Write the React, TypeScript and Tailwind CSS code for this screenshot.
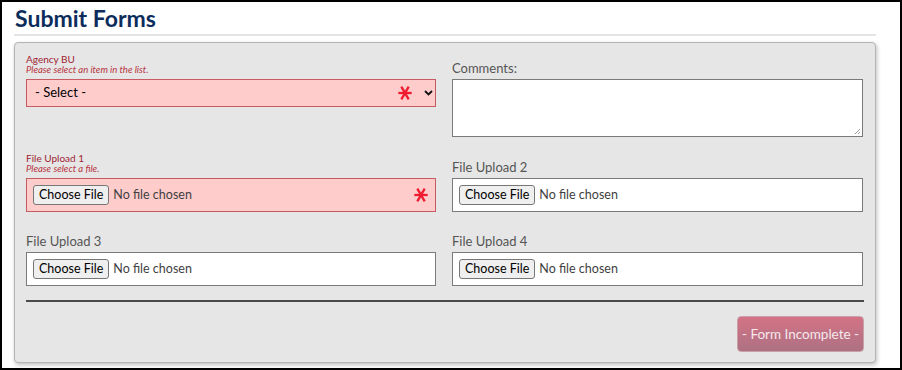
import React from "react";

function Asterisk() {
  return (
    <svg width="14" height="14" viewBox="0 0 14 14" className="shrink-0">
      <g stroke="#ee1c2e" strokeWidth="2.3" strokeLinecap="butt">
        <line x1="0.3" y1="7" x2="13.7" y2="7" />
        <line x1="3.3" y1="0.6" x2="10.7" y2="13.4" />
        <line x1="10.7" y1="0.6" x2="3.3" y2="13.4" />
      </g>
    </svg>
  );
}

function FileBox({ invalid }: { invalid?: boolean }) {
  return (
    <div
      className={
        "h-[34px] flex items-center px-[6px] border " +
        (invalid ? "bg-[#ffcccc] border-[#c85a62]" : "bg-white border-[#7a7a7a]")
      }
    >
      <span className="h-[20px] flex items-center px-[5px] bg-[#efefef] border border-[#767676] rounded-[3px] text-[12.5px] text-black">
        Choose File
      </span>
      <span className="ml-[4px] text-[12.5px] text-[#3f3f3f]">No file chosen</span>
      {invalid && (
        <span className="ml-auto mr-[1px]">
          <Asterisk />
        </span>
      )}
    </div>
  );
}

function RedLabel({ title, hint }: { title: string; hint: string }) {
  return (
    <div className="h-[24px] flex flex-col justify-end pb-[4px]">
      <div className="text-[10px] leading-[11px] text-[#9e2434]">{title}</div>
      <div className="text-[9.5px] leading-[10px] italic text-[#b8343f]">{hint}</div>
    </div>
  );
}

function GrayLabel({ title }: { title: string }) {
  return (
    <div className="h-[24px] flex flex-col justify-end pb-[3px]">
      <div className="text-[13px] leading-[15px] text-[#555]">{title}</div>
    </div>
  );
}

export default function App() {
  return (
    <div className="w-[902px] h-[370px] border-2 border-black bg-white overflow-hidden font-['Lato',sans-serif]">
      <div className="pl-[13px] pt-[2px]">
        <h1 className="text-[23px] leading-[28px] font-bold text-[#0c2d5c]">Submit Forms</h1>
      </div>
      <div className="ml-[12px] mt-[2px] w-[862px] h-[2px] bg-[#e4e4e4]" />
      <div className="ml-[12px] mt-[6px] w-[862px] bg-[#e6e6e6] border border-[#b4b4b4] rounded-[4px] shadow-[1px_2px_4px_rgba(0,0,0,0.25)] px-[11px] pt-[12px] pb-[10px]">
        <div className="grid grid-cols-[410px_411px] gap-x-[16px] gap-y-[16px]">
          <div>
            <RedLabel title="Agency BU" hint="Please select an item in the list." />
            <div className="h-[28px] flex items-center pl-[8px] pr-[2px] bg-[#ffcccc] border border-[#c85a62]">
              <span className="text-[13px] text-black">- Select -</span>
              <span className="ml-auto mr-[12px]">
                <Asterisk />
              </span>
              <svg width="9" height="6" viewBox="0 0 9 6">
                <path d="M1 1 L4.5 4.5 L8 1" stroke="#111" strokeWidth="1.8" fill="none" />
              </svg>
            </div>
          </div>
          <div>
            <GrayLabel title="Comments:" />
            <div className="relative h-[58px] bg-white border border-[#7a7a7a]">
              <svg className="absolute right-[1px] bottom-[1px]" width="7" height="7" viewBox="0 0 7 7">
                <path d="M6 1 L1 6 M6 4 L4 6" stroke="#999" strokeWidth="1" />
              </svg>
            </div>
          </div>
          <div className="mt-[1px]">
            <RedLabel title="File Upload 1" hint="Please select a file." />
            <FileBox invalid />
          </div>
          <div className="mt-[1px]">
            <GrayLabel title="File Upload 2" />
            <FileBox />
          </div>
          <div>
            <GrayLabel title="File Upload 3" />
            <FileBox />
          </div>
          <div>
            <GrayLabel title="File Upload 4" />
            <FileBox />
          </div>
        </div>
        <div className="mt-[14px] h-[2px] bg-[#4a4a4a]" />
        <div className="flex justify-end mt-[14px]">
          <button className="w-[127px] h-[36px] rounded-[4px] bg-gradient-to-b from-[#d37385] to-[#ad7184] border border-[#c9a0a8] text-[13.5px] text-[#f5e9ec]">
            - Form Incomplete -
          </button>
        </div>
      </div>
    </div>
  );
}
